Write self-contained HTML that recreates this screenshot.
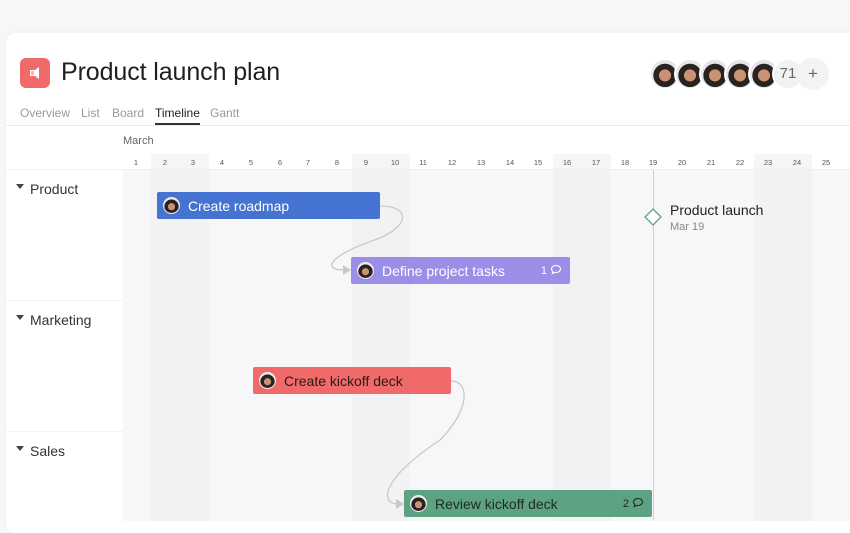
<!DOCTYPE html>
<html><head><meta charset="utf-8"><style>
*{margin:0;padding:0;box-sizing:border-box}
body{width:850px;height:521px;overflow:hidden;background:#f7f7f8;font-family:"Liberation Sans",Arial,sans-serif;position:relative}
.card{position:absolute;left:6px;top:33px;width:860px;height:500px;background:#fff;border-radius:10px;box-shadow:0 0 6px rgba(0,0,0,.04)}
.a{position:absolute}
.tab{position:absolute;top:106px;font-size:12px;color:#9a9a9e}
.day{position:absolute;top:158px;width:20px;margin-left:-10px;text-align:center;font-size:7.5px;color:#555}
.bar{position:absolute;height:27px;border-radius:2px;color:#fff;font-size:14px;line-height:28px;padding-left:31px}
.av{position:absolute;left:6px;top:5px;width:17px;height:17px;border-radius:50%;background:radial-gradient(circle at 50% 58%,#c99275 0 30%,#2a2220 32% 62%,#e8e8e8 64%);border:1px solid #eee}
.big{position:absolute;top:58px;width:32px;height:32px;border-radius:50%;border:2px solid #fff;background:radial-gradient(circle at 50% 55%,#c99275 0 28%,#2a2220 30% 55%,#e6e6e6 57%)}
.grp{position:absolute;left:16px;font-size:14px;color:#333}
.grp:before{content:"";display:inline-block;border:4px solid transparent;border-top:5px solid #444;margin-right:6px;vertical-align:1px}
.we{position:absolute;top:154px;width:58px;height:367px;background:#efeff1;opacity:.55}
.cm{position:absolute;right:8px;top:0;font-size:11px}
</style></head><body>
<div class="card"></div>
<div class="a" style="left:20px;top:58px;width:30px;height:30px;border-radius:6px;background:#f06a6a"></div>
<svg class="a" style="left:27px;top:65px" width="16" height="16" viewBox="0 0 16 16"><rect x="3" y="5" width="5" height="6" fill="#fff"/><path d="M8 5 L12 2 V14 L8 11Z" fill="#fff"/><rect x="4" y="6.5" width="3" height="1" fill="#f06a6a"/><rect x="4" y="8.5" width="3" height="1" fill="#f06a6a"/></svg>
<div class="a" style="left:61px;top:58px;font-size:25px;color:#1e1f21;letter-spacing:-.1px">Product launch plan</div>
<div class="big" style="left:649px"></div>
<div class="big" style="left:674px"></div>
<div class="big" style="left:699px"></div>
<div class="big" style="left:724px"></div>
<div class="big" style="left:748px"></div>
<div class="a" style="left:772px;top:58px;width:32px;height:32px;border-radius:50%;background:#f2f2f3;border:2px solid #fff;font-size:15px;color:#666;text-align:center;line-height:28px">71</div>
<div class="a" style="left:797px;top:58px;width:32px;height:32px;border-radius:50%;background:#f3f3f4;font-size:17px;color:#666;text-align:center;line-height:31px">+</div>
<div class="tab" style="left:20px">Overview</div>
<div class="tab" style="left:81px">List</div>
<div class="tab" style="left:112px">Board</div>
<div class="tab" style="left:155px;color:#1e1f21">Timeline</div>
<div class="a" style="left:155px;top:123px;width:45px;height:2px;background:#333"></div>
<div class="tab" style="left:210px">Gantt</div>
<div class="a" style="left:6px;top:125px;width:844px;height:1px;background:#ebebed"></div>
<div class="a" style="left:123px;top:135px;font-size:11px;color:#666">March</div>
<div class="a" style="left:123px;top:170px;width:727px;height:351px;background:#f7f7f9"></div>
<div class="we" style="left:151px"></div>
<div class="we" style="left:352px"></div>
<div class="we" style="left:553px"></div>
<div class="we" style="left:754px"></div>
<div class="a" style="left:6px;top:169px;width:844px;height:1px;background:#f0f0f2"></div>
<div class="a" style="left:6px;top:300px;width:117px;height:1px;background:#f3f3f5"></div>
<div class="a" style="left:6px;top:431px;width:117px;height:1px;background:#f3f3f5"></div>
<div class="day" style="left:136px">1</div><div class="day" style="left:165px">2</div><div class="day" style="left:193px">3</div><div class="day" style="left:222px">4</div><div class="day" style="left:251px">5</div><div class="day" style="left:280px">6</div><div class="day" style="left:308px">7</div><div class="day" style="left:337px">8</div><div class="day" style="left:366px">9</div><div class="day" style="left:395px">10</div><div class="day" style="left:423px">11</div><div class="day" style="left:452px">12</div><div class="day" style="left:481px">13</div><div class="day" style="left:510px">14</div><div class="day" style="left:538px">15</div><div class="day" style="left:567px">16</div><div class="day" style="left:596px">17</div><div class="day" style="left:625px">18</div><div class="day" style="left:653px">19</div><div class="day" style="left:682px">20</div><div class="day" style="left:711px">21</div><div class="day" style="left:740px">22</div><div class="day" style="left:768px">23</div><div class="day" style="left:797px">24</div><div class="day" style="left:826px">25</div>
<div class="grp" style="top:181px">Product</div>
<div class="grp" style="top:312px">Marketing</div>
<div class="grp" style="top:443px">Sales</div>
<div class="a" style="left:653px;top:170px;width:1px;height:351px;background:#b7dcd6"></div>
<svg class="a" style="left:643px;top:207px" width="20" height="20"><path d="M10 2 L18 10 L10 18 L2 10Z" fill="#fff" stroke="#5da283" stroke-width="1.3"/></svg>
<div class="a" style="left:670px;top:202px;font-size:14px;color:#1e1f21">Product launch</div>
<div class="a" style="left:670px;top:221px;font-size:11px;color:#888">Mar 19</div>
<svg class="a" style="left:0;top:0" width="850" height="521"><g fill="none" stroke="#c9c9cc" stroke-width="1.3"><path d="M380 206 C410 206 410 225 380 238 C330 255 320 270 345 270"/><path d="M451 381 C470 381 470 410 440 440 C380 480 380 504 398 504"/></g><path d="M343 265 L351 270 L343 275Z" fill="#c9c9cc"/><path d="M396 499 L404 504 L396 509Z" fill="#c9c9cc"/></svg>
<div class="bar" style="left:157px;top:192px;width:223px;background:#4573d2"><span class="av"></span>Create roadmap</div>
<div class="bar" style="left:351px;top:257px;width:219px;background:#9b8ee6"><span class="av"></span>Define project tasks<span class="cm">1 <svg width="12" height="11" viewBox="0 0 12 11" style="vertical-align:-1px"><path d="M6 1.5C3.2 1.5 1.5 3.2 1.5 5 1.5 6 2 6.8 2.8 7.4L2.3 9.6 4.8 8.4C5.2 8.5 5.6 8.5 6 8.5 8.8 8.5 10.5 6.8 10.5 5 10.5 3.2 8.8 1.5 6 1.5Z" fill="none" stroke="#fff" stroke-width="1.1"/></svg></span></div>
<div class="bar" style="left:253px;top:367px;width:198px;background:#f06a6a;color:#2a1a1a"><span class="av"></span>Create kickoff deck</div>
<div class="bar" style="left:404px;top:490px;width:248px;background:#5da283;color:#1e2a24"><span class="av"></span>Review kickoff deck<span class="cm">2 <svg width="12" height="11" viewBox="0 0 12 11" style="vertical-align:-1px"><path d="M6 1.5C3.2 1.5 1.5 3.2 1.5 5 1.5 6 2 6.8 2.8 7.4L2.3 9.6 4.8 8.4C5.2 8.5 5.6 8.5 6 8.5 8.8 8.5 10.5 6.8 10.5 5 10.5 3.2 8.8 1.5 6 1.5Z" fill="none" stroke="#1e2a24" stroke-width="1.1"/></svg></span></div>
</body></html>
